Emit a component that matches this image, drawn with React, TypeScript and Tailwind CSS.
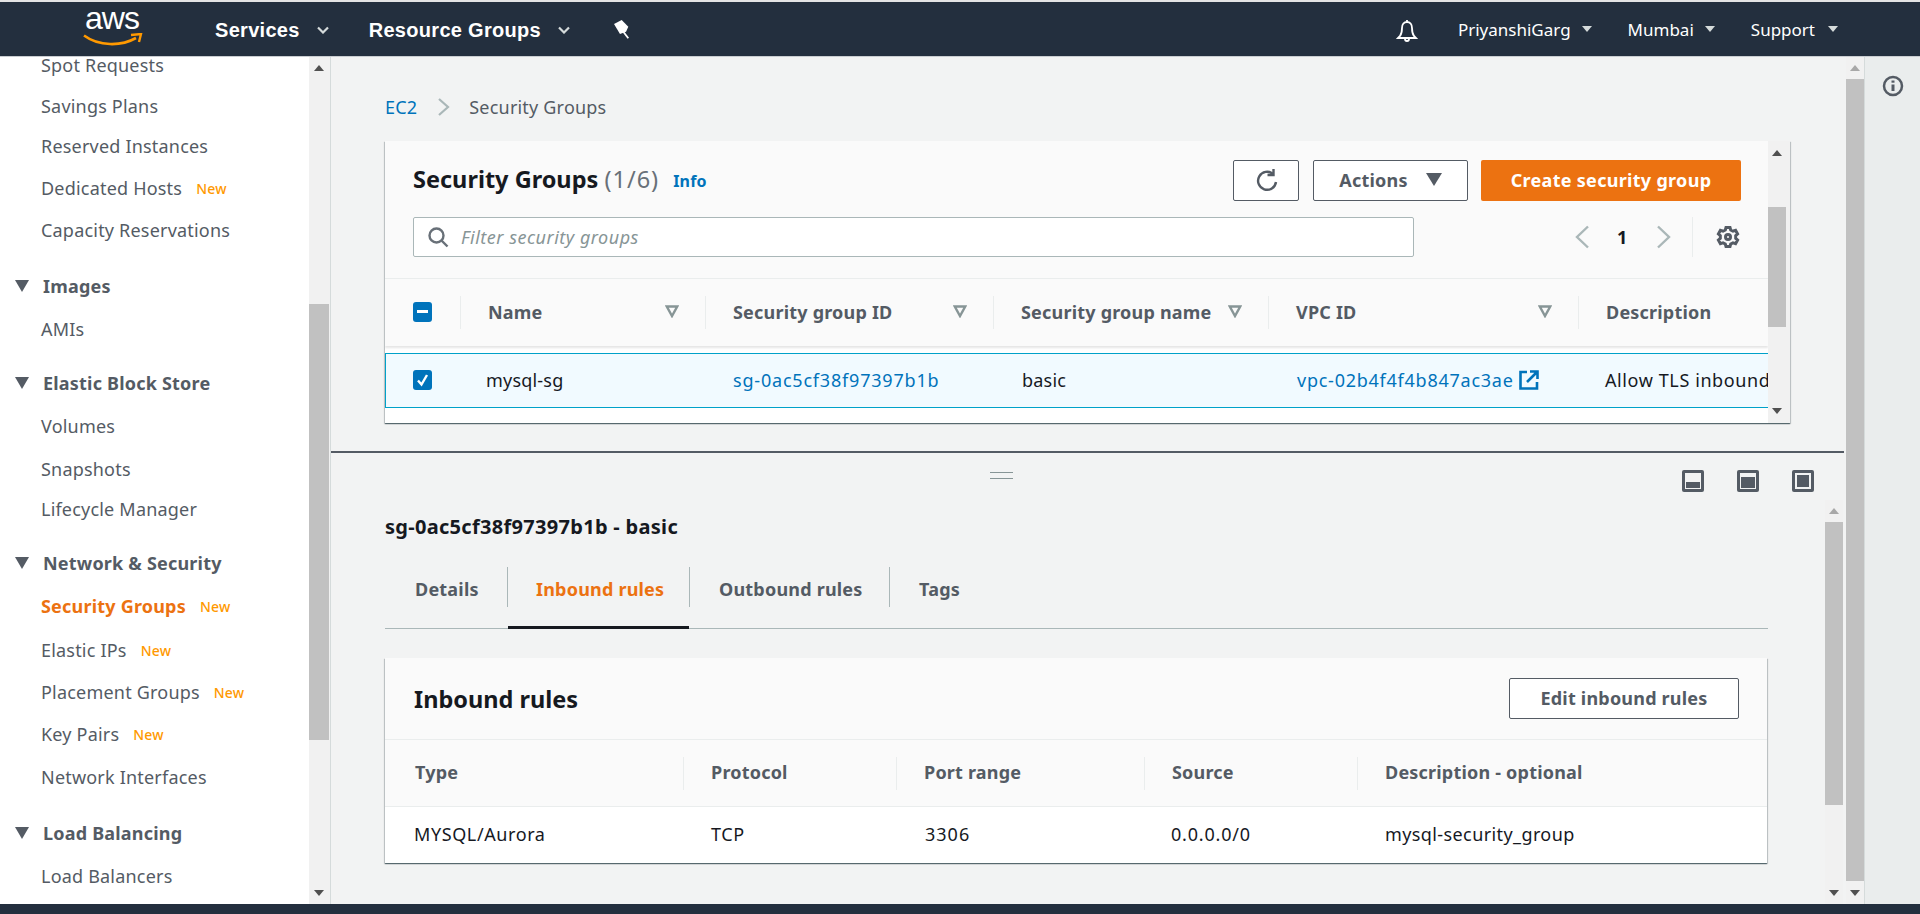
import React from "react";

const Up = ({ c = "border-b-[#505050]" }: { c?: string }) => (
  <div className={`w-0 h-0 border-x-[5px] border-x-transparent border-b-[6px] ${c}`} />
);
const Down = ({ c = "border-t-[#505050]" }: { c?: string }) => (
  <div className={`w-0 h-0 border-x-[5px] border-x-transparent border-t-[6px] ${c}`} />
);

const Caret = ({ c = "ml-[11px]" }: { c?: string }) => (
  <span className={`w-0 h-0 border-x-[5px] border-x-transparent border-t-[6px] border-t-[#d5dbdb] -mt-[3px] ${c}`} />
);

const Chev = () => (
  <svg className="ml-[17px] mt-[1px]" width="12" height="8" viewBox="0 0 12 8" fill="none" stroke="#d5dbdb" strokeWidth="2.2">
    <path d="M1 1.5l5 5 5-5" />
  </svg>
);

const New = () => <span className="ml-[14px] text-[14px] font-medium text-[#ff9900] leading-none mt-[2px]">New</span>;

const Item = ({ t, n, h, active }: { t: string; n?: boolean; h: string; active?: boolean }) => (
  <div className={`flex items-center pl-[41px] ${h}`}>
    <span className={active ? "text-[#ec7211] font-bold" : "text-[#545b64]"}>{t}</span>
    {n && <New />}
  </div>
);

const Section = ({ t, c }: { t: string; c: string }) => (
  <div className={`flex items-center pl-[15px] h-[41px] ${c}`}>
    <span className="w-0 h-0 border-x-[7px] border-x-transparent border-t-[12px] border-t-[#545b64] mr-[14px]" />
    <span className="font-bold text-[#545b64]">{t}</span>
  </div>
);

const Sort = ({ c }: { c: string }) => (
  <svg className={c} width="14" height="13" viewBox="0 0 14 13" fill="none" stroke="#879596" strokeWidth="2.4">
    <path d="M1.8 1.5h10.4L7 11z" />
  </svg>
);

const Check = ({ minus }: { minus?: boolean }) => (
  <div className="w-[19px] h-[20px] rounded-[3px] bg-[#0073bb] flex items-center justify-center">
    {minus ? (
      <div className="w-[11px] h-[3px] bg-white" />
    ) : (
      <svg width="13" height="14" viewBox="0 0 13 14" fill="none" stroke="white" strokeWidth="2.4">
        <path d="M2 7.5l3.5 4L11 2" />
      </svg>
    )}
  </div>
);

const Th = ({ t, first, sort, bold = true }: { t: string; first?: boolean; sort?: boolean; bold?: boolean }) => (
  <div className="relative flex items-center justify-between pr-[26px] min-w-0 pb-[2px]">
    <span className={`pl-[28px] whitespace-nowrap text-[#545b64] ${bold ? "font-bold" : ""}`}>{t}</span>
    {sort && <Sort c="shrink-0" />}
    {!first && <div className="absolute left-0 top-[17px] h-[33px] w-px bg-[#eaeded]" />}
  </div>
);

const SizeIcon = ({ fill, wide }: { fill: string; wide?: boolean }) => (
  <div className="w-[22px] h-[22px] bg-[#545b64] rounded-[2px] p-[3px]">
    <div className={`w-full h-full bg-[#f2f3f3] flex items-end ${wide ? "p-[2px]" : "p-px"}`}>
      <div className={`w-full bg-[#545b64] ${fill}`} />
    </div>
  </div>
);

export default function App() {
  return (
    <div className="w-[1920px] h-[914px] overflow-hidden flex flex-col bg-[#f2f3f3] text-[18px] leading-[24px] tracking-[0.2px] text-[#16191f] [font-family:'Noto_Sans','Open_Sans',sans-serif]">
      <div className="h-[2px] bg-[#e4e4e4] shrink-0" />
      {/* top navigation */}
      <header className="h-[55px] shrink-0 bg-[#232f3e] flex items-center text-white border-b border-[#c9cdd1]">
        <div className="ml-[83px] w-[57px] h-[36px] relative shrink-0">
          <span className="absolute left-[2px] -top-[11px] text-[32px] tracking-[-1px] leading-[36px] text-white [font-family:'Liberation_Sans',sans-serif]">aws</span>
          <svg className="absolute left-0 top-[22px]" width="60" height="14" viewBox="0 0 60 14" fill="none">
            <path d="M1 2.500c15 11 37 11 52 2.500" stroke="#ff9900" strokeWidth="2.600" />
            <path d="M48 2l10-1-2 8" stroke="#ff9900" strokeWidth="2.400" />
          </svg>
        </div>
        <span className="ml-[75px] pt-[2px] font-bold text-[20px] tracking-[0.3px] [font-family:'Liberation_Sans',sans-serif]">Services</span>
        <Chev />
        <span className="ml-[40px] pt-[2px] font-bold text-[20px] tracking-[0.3px] [font-family:'Liberation_Sans',sans-serif]">Resource Groups</span>
        <Chev />
        <svg className="ml-[43px]" width="18" height="19" viewBox="0 0 18 19" fill="white">
          <path d="M1 4L8.700 0l6.600 6.700L13 11.700 7 14z" />
          <path d="M10.300 11.700l5 6.600" stroke="white" strokeWidth="1.800" />
        </svg>
        <div className="ml-auto flex items-center pt-[2px] text-[17px] tracking-normal">
          <svg width="24" height="25" viewBox="0 0 24 25" fill="none" stroke="white" strokeWidth="1.8">
            <path d="M12 2v2M5 18c1.500-2 2-3 2-8 0-3.500 2-6 5-6s5 2.500 5 6c0 5 .5 6 2 8l2 2H3z" />
            <path d="M10 21a2 2 0 0 0 4 0" />
          </svg>
          <span className="ml-[39px]">PriyanshiGarg</span>
          <Caret />
          <span className="ml-[36px]">Mumbai</span>
          <Caret />
          <span className="ml-[36px]">Support</span>
          <Caret c="ml-[13px]" />
          <div className="w-[82px]" />
        </div>
      </header>

      <div className="flex-1 flex min-h-0">
        {/* sidebar */}
        <nav className="w-[309px] shrink-0 bg-white overflow-hidden">
          <div className="-mt-[13px]">
            <Item h="h-[42px]" t="Spot Requests" />
            <Item h="h-[40px]" t="Savings Plans" />
            <Item h="h-[40px]" t="Reserved Instances" />
            <Item h="h-[44px]" t="Dedicated Hosts" n />
            <Item h="h-[40px]" t="Capacity Reservations" />
            <Section t="Images" c="mt-[15px]" />
            <Item h="h-[46px]" t="AMIs" />
            <Section t="Elastic Block Store" c="mt-[10px]" />
            <Item h="h-[46px]" t="Volumes" />
            <Item h="h-[39px]" t="Snapshots" />
            <Item h="h-[41px]" t="Lifecycle Manager" />
            <Section t="Network &amp; Security" c="mt-[13px]" />
            <Item h="h-[46px]" t="Security Groups" n active />
            <Item h="h-[41px]" t="Elastic IPs" n />
            <Item h="h-[43px]" t="Placement Groups" n />
            <Item h="h-[42px]" t="Key Pairs" n />
            <Item h="h-[43px]" t="Network Interfaces" />
            <Section t="Load Balancing" c="mt-[14px]" />
            <Item h="h-[46px]" t="Load Balancers" />
          </div>
        </nav>
        <div className="w-[22px] shrink-0 bg-[#f1f1f1] border-r border-[#d5dbdb] flex flex-col items-center pr-px">
          <div className="h-[22px] flex items-center justify-center"><Up /></div>
          <div className="h-[225px]" />
          <div className="w-full flex-1 bg-[#c1c1c1]" />
          <div className="h-[142px]" />
          <div className="h-[22px] flex items-center justify-center"><Down /></div>
        </div>

        {/* main */}
        <main className="flex-1 min-w-0 flex flex-col">
          <section className="h-[396px] shrink-0 border-b-2 border-[#545b64] mr-[2px] pl-[54px]">
            <div className="pt-[37px] flex items-center h-[62px] text-[#545b64]">
              <span className="text-[#0073bb]">EC2</span>
              <svg className="ml-[20px]" width="13" height="18" viewBox="0 0 13 18" fill="none" stroke="#aab7b8" strokeWidth="2.2">
                <path d="M2 1l9 8-9 8" />
              </svg>
              <span className="ml-[19px]">Security Groups</span>
            </div>
            <div className="mt-[22px] w-[1405px] h-[282px] flex bg-white shadow-[0_1px_1px_0_rgba(0,28,36,0.5),1px_1px_1px_0_rgba(0,28,36,0.15),-1px_1px_1px_0_rgba(0,28,36,0.15)]">
              <div className="w-[1383px] shrink-0 flex flex-col overflow-hidden">
                <div className="h-[138px] shrink-0 bg-[#fafafa] border-b border-[#eaeded] pl-[28px] pr-[27px] pt-[19px]">
                  <div className="h-[41px] flex items-center">
                    <h1 className="text-[23.5px] font-bold text-[#16191f] pb-[3px] tracking-normal">
                      Security Groups <span className="font-normal text-[#687078] tracking-[1px]">(1/6)</span>
                    </h1>
                    <span className="ml-[14px] text-[16px] font-bold text-[#0073bb]">Info</span>
                    <button className="ml-auto w-[66px] h-[41px] bg-white border border-[#545b64] rounded-[2px] flex items-center justify-center">
                      <svg width="25" height="25" viewBox="0 0 25 25" fill="none" stroke="#545b64" strokeWidth="2.400">
                        <path d="M19 6a9 9 0 1 0 3 8" />
                        <path d="M19.500 1v6h-6" />
                      </svg>
                    </button>
                    <button className="ml-[14px] w-[155px] h-[41px] bg-white border border-[#545b64] rounded-[2px] flex items-center justify-center font-bold text-[#545b64] pb-[2px]">
                      Actions
                      <span className="ml-[18px] w-0 h-0 border-x-[8px] border-x-transparent border-t-[13px] border-t-[#545b64]" />
                    </button>
                    <button className="ml-[13px] w-[260px] h-[41px] bg-[#ec7211] rounded-[2px] text-white font-bold pb-[2px] tracking-[0.3px]">Create security group</button>
                  </div>
                  <div className="mt-[16px] h-[40px] flex items-center">
                    <div className="w-[1001px] h-[40px] bg-white border border-[#aab7b8] rounded-[2px] flex items-center pl-[13px]">
                      <svg width="22" height="22" viewBox="0 0 22 22" fill="none" stroke="#687078" strokeWidth="2.4">
                        <circle cx="9.500" cy="9.500" r="7" />
                        <path d="M14.500 14.500l6 6" />
                      </svg>
                      <span className="ml-[12px] italic text-[#879596] tracking-[0.5px]">Filter security groups</span>
                    </div>
                    <svg className="ml-[160px]" width="16" height="24" viewBox="0 0 16 24" fill="none" stroke="#aab7b8" strokeWidth="2.400">
                      <path d="M14 1.500L3 12l11 10.500" />
                    </svg>
                    <span className="ml-[27px] w-[16px] font-bold text-[#16191f]">1</span>
                    <svg className="ml-[23px]" width="16" height="24" viewBox="0 0 16 24" fill="none" stroke="#aab7b8" strokeWidth="2.400">
                      <path d="M2 1.500L13 12 2 22.500" />
                    </svg>
                    <div className="ml-[20px] w-px h-[40px] bg-[#eaeded]" />
                    <svg className="ml-[23px]" width="24" height="24" viewBox="0 0 24 24" fill="none" stroke="#545b64" strokeWidth="3">
                      <path d="M10 2.500h4l.7 2.500 2.300 1.200 2.600-.8 2 3.500-1.900 1.800v2.600l1.900 1.800-2 3.500-2.600-.8-2.300 1.200-.7 2.500h-4l-.7-2.500L7 17.800l-2.600.8-2-3.500 1.900-1.800v-2.600L2.400 8.900l2-3.500 2.600.8L9.300 5z" />
                      <circle cx="12" cy="12" r="2.500" />
                    </svg>
                  </div>
                </div>
                <div className="h-[67px] shrink-0 bg-[#fafafa] grid grid-cols-[75px_245px_288px_275px_310px_190px] shadow-[0_2px_2px_rgba(0,0,0,0.1)]">
                  <div className="pl-[28px] flex items-center pb-[2px]"><Check minus /></div>
                  <Th t="Name" sort />
                  <Th t="Security group ID" sort />
                  <Th t="Security group name" sort />
                  <Th t="VPC ID" sort />
                  <Th t="Description" />
                </div>
                <div className="mt-[7px] h-[55px] shrink-0 bg-[#f1faff] border-y border-[#00a1c9] border-l grid grid-cols-[75px_245px_288px_275px_310px_190px] items-center pb-[2px]">
                  <div className="pl-[27px]"><Check /></div>
                  <div className="pl-[25px]">mysql-sg</div>
                  <div className="pl-[27px] text-[#0073bb] tracking-[0.8px]">sg-0ac5cf38f97397b1b</div>
                  <div className="pl-[28px]">basic</div>
                  <div className="pl-[28px] text-[#0073bb] flex items-center whitespace-nowrap tracking-[0.75px]">
                    vpc-02b4f4f4b847ac3ae
                    <svg className="ml-[5px] shrink-0" width="20" height="20" viewBox="0 0 20 20" fill="none" stroke="#0073bb" strokeWidth="2.600">
                      <path d="M8 2H1.500v16.500h16.500V12M11 1.500h7.500V9M18 2L8 12" />
                    </svg>
                  </div>
                  <div className="pl-[26px] whitespace-nowrap overflow-hidden tracking-[0.6px]">Allow TLS inbound</div>
                </div>
              </div>
              <div className="w-[22px] shrink-0 bg-[#f1f1f1] flex flex-col items-center pr-[4px]">
                <div className="h-[24px] flex items-center justify-center"><Up /></div>
                <div className="h-[42px]" />
                <div className="w-full h-[120px] bg-[#c1c1c1]" />
                <div className="flex-1" />
                <div className="h-[24px] flex items-center justify-center"><Down /></div>
              </div>
            </div>
          </section>

          <section className="flex-1 min-h-0 flex flex-col">
            <div className="h-[47px] shrink-0 relative flex items-center justify-end pr-[32px] pt-[8px] gap-[33px]">
              <div className="absolute left-[659px] top-[19px] w-[23px] h-[7px] border-y border-[#879596]" />
              <SizeIcon fill="h-[6px]" />
              <SizeIcon fill="h-[11px]" />
              <SizeIcon fill="h-full" wide />
            </div>
            <div className="flex-1 min-h-0 flex">
              <div className="w-[1494px] shrink-0 pl-[54px] overflow-hidden">
                <h2 className="pt-[15px] h-[52px] font-bold text-[20px] tracking-[0.3px] text-[#16191f] leading-[24px]">sg-0ac5cf38f97397b1b - basic</h2>
                <div className="mt-[15px] h-[62px] w-[1383px] border-b border-[#aab7b8] flex text-[#545b64] font-bold">
                  <div className="w-[123px] h-[61px] pl-[30px] flex items-center pb-[18px] relative">
                    Details
                  </div>
                  <div className="w-[181px] h-[62px] border-b-[3px] border-[#16191f] flex items-center pl-[28px] pb-[15px] text-[#ec7211] relative">
                    <div className="absolute -left-px top-0 h-[40px] w-px bg-[#aab7b8]" />
                    <div className="absolute -right-px top-0 h-[40px] w-px bg-[#aab7b8]" />
                    Inbound rules
                  </div>
                  <div className="w-[201px] h-[61px] pl-[30px] flex items-center pb-[18px] relative">
                    <div className="absolute right-0 top-0 h-[40px] w-px bg-[#aab7b8]" />
                    Outbound rules
                  </div>
                  <div className="pl-[29px] h-[61px] flex items-center pb-[18px]">Tags</div>
                </div>
                <div className="mt-[29px] w-[1382px] h-[205px] bg-white shadow-[0_1px_1px_0_rgba(0,28,36,0.5),1px_1px_1px_0_rgba(0,28,36,0.15),-1px_1px_1px_0_rgba(0,28,36,0.15)]">
                  <div className="h-[82px] bg-[#fafafa] border-b border-[#eaeded] flex items-center justify-between pl-[29px] pr-[28px]">
                    <h3 className="text-[23.5px] font-bold text-[#16191f] tracking-normal">Inbound rules</h3>
                    <button className="w-[230px] h-[41px] bg-white border border-[#545b64] rounded-[2px] font-bold text-[#545b64] pb-[2px]">Edit inbound rules</button>
                  </div>
                  <div className="h-[67px] bg-[#fafafa] border-b border-[#eaeded] grid grid-cols-[298px_213px_248px_213px_410px]">
                    <div className="pl-[30px] flex items-center font-bold text-[#545b64] pb-[2px]">Type</div>
                    <Th t="Protocol" />
                    <Th t="Port range" />
                    <Th t="Source" />
                    <Th t="Description - optional" />
                  </div>
                  <div className="h-[55px] grid grid-cols-[298px_213px_248px_213px_410px] items-center pb-[2px]">
                    <div className="pl-[29px] tracking-[0.6px]">MYSQL/Aurora</div>
                    <div className="pl-[28px] tracking-[0.6px]">TCP</div>
                    <div className="pl-[29px] tracking-[1px]">3306</div>
                    <div className="pl-[27px] tracking-[0.8px]">0.0.0.0/0</div>
                    <div className="pl-[28px] tracking-[0.4px]">mysql-security_group</div>
                  </div>
                </div>
              </div>
              <div className="w-[18px] shrink-0 bg-[#f1f1f1] flex flex-col items-center">
                <div className="h-[22px] flex items-center justify-center"><Up c="border-b-[#a8a8a8]" /></div>
                <div className="w-full h-[283px] bg-[#c1c1c1]" />
                <div className="flex-1" />
                <div className="h-[22px] flex items-center justify-center"><Down /></div>
              </div>
            </div>
          </section>
        </main>

        <div className="w-[18px] shrink-0 bg-[#f1f1f1] flex flex-col items-center">
          <div className="h-[22px] flex items-center justify-center"><Up c="border-b-[#a8a8a8]" /></div>
          <div className="w-full flex-1 bg-[#c1c1c1]" />
          <div className="h-[23px] flex items-center justify-center"><Down /></div>
        </div>
        <aside className="w-[56px] shrink-0 border-l border-[#d5dbdb] bg-[#eaeded] pl-[17px] pt-[18px]">
          <svg width="22" height="22" viewBox="0 0 22 22" fill="none" stroke="#545b64" strokeWidth="2.500">
            <circle cx="11" cy="11" r="9" />
            <path d="M11 9.500V16" strokeWidth="3" />
            <path d="M11 5.500v2.200" strokeWidth="3" />
          </svg>
        </aside>
      </div>
      <footer className="h-[10px] shrink-0 bg-[#232f3e]" />
    </div>
  );
}
